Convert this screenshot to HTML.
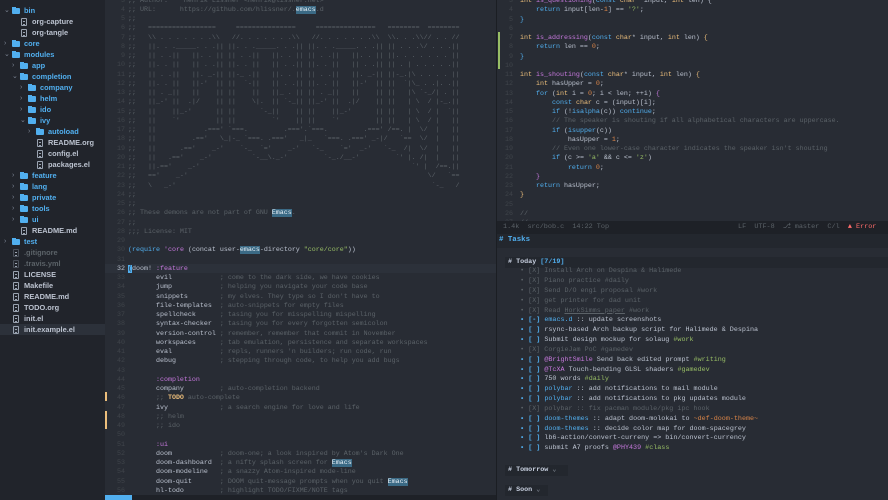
<!DOCTYPE html>
<html><head><meta charset="utf-8"><style>
*{margin:0;padding:0;box-sizing:border-box}
body{width:888px;height:500px;overflow:hidden;background:#282c34;position:relative;font-family:"Liberation Mono",monospace}
.abs{position:absolute}
#side{left:0;top:0;width:105px;height:500px;background:#21242b;font-family:"Liberation Sans",sans-serif;font-weight:bold;font-size:7.4px;color:#bbc2cf}
.r{position:absolute;height:11px;line-height:11px;white-space:nowrap}
.d{color:#51afef}
.dim{color:#5B6268}
.chev{position:absolute;color:#7c8594;font-size:7px;font-weight:normal}
.fold{position:absolute;width:8px;height:6px;background:#51afef;top:3px;border-radius:1px}
.fold:before{content:"";position:absolute;left:0;top:-1px;width:4px;height:2px;background:#51afef}
.file{position:absolute;width:6px;height:8px;border:1px solid #9aa3b1;top:1.5px;border-radius:1px}
.file:after{content:"";position:absolute;left:1px;top:2px;width:2px;height:2px;border-top:1px solid #9aa3b1;border-bottom:1px solid #9aa3b1}
.pre{white-space:pre;font-size:6.67px;line-height:9.25px;color:#bbc2cf}
.ln{color:#3f444a;text-align:right;width:22px}
.c{color:#5B6268}.k{color:#51afef}.t{color:#ECBE7B}.f{color:#c678dd}.n{color:#da8548}.s{color:#98be65}.p{color:#c678dd}
.hl{background:#3b6a85;color:#e6eef5}
.todo{color:#ECBE7B;font-weight:bold}
.org{white-space:pre;font-size:6.72px;line-height:9.83px;color:#bbc2cf}
.b{color:#51afef;font-weight:bold}
.x{color:#5B6268}
.g{color:#98be65}
.m{color:#c678dd}
.o{color:#da8548}
</style></head><body>

<div id="side" class="abs">
<div class="r" style="top:5px;left:4px"><span class="chev">⌄</span><span class="fold" style="left:8px"></span><span class="d" style="position:absolute;left:20px">bin</span></div>
<div class="r" style="top:16px;left:21px"><span class="file"></span><span style="position:absolute;left:11px">org-capture</span></div>
<div class="r" style="top:27px;left:21px"><span class="file"></span><span style="position:absolute;left:11px">org-tangle</span></div>
<div class="r" style="top:38px;left:4px"><span class="chev">›</span><span class="fold" style="left:8px"></span><span class="d" style="position:absolute;left:20px">core</span></div>
<div class="r" style="top:49px;left:4px"><span class="chev">⌄</span><span class="fold" style="left:8px"></span><span class="d" style="position:absolute;left:20px">modules</span></div>
<div class="r" style="top:60px;left:12px"><span class="chev">›</span><span class="fold" style="left:8px"></span><span class="d" style="position:absolute;left:20px">app</span></div>
<div class="r" style="top:71px;left:12px"><span class="chev">⌄</span><span class="fold" style="left:8px"></span><span class="d" style="position:absolute;left:20px">completion</span></div>
<div class="r" style="top:82px;left:20px"><span class="chev">›</span><span class="fold" style="left:8px"></span><span class="d" style="position:absolute;left:20px">company</span></div>
<div class="r" style="top:93px;left:20px"><span class="chev">›</span><span class="fold" style="left:8px"></span><span class="d" style="position:absolute;left:20px">helm</span></div>
<div class="r" style="top:104px;left:20px"><span class="chev">›</span><span class="fold" style="left:8px"></span><span class="d" style="position:absolute;left:20px">ido</span></div>
<div class="r" style="top:115px;left:20px"><span class="chev">⌄</span><span class="fold" style="left:8px"></span><span class="d" style="position:absolute;left:20px">ivy</span></div>
<div class="r" style="top:126px;left:28px"><span class="chev">›</span><span class="fold" style="left:8px"></span><span class="d" style="position:absolute;left:20px">autoload</span></div>
<div class="r" style="top:137px;left:37px"><span class="file"></span><span style="position:absolute;left:11px">README.org</span></div>
<div class="r" style="top:148px;left:37px"><span class="file"></span><span style="position:absolute;left:11px">config.el</span></div>
<div class="r" style="top:159px;left:37px"><span class="file"></span><span style="position:absolute;left:11px">packages.el</span></div>
<div class="r" style="top:170px;left:12px"><span class="chev">›</span><span class="fold" style="left:8px"></span><span class="d" style="position:absolute;left:20px">feature</span></div>
<div class="r" style="top:181px;left:12px"><span class="chev">›</span><span class="fold" style="left:8px"></span><span class="d" style="position:absolute;left:20px">lang</span></div>
<div class="r" style="top:192px;left:12px"><span class="chev">›</span><span class="fold" style="left:8px"></span><span class="d" style="position:absolute;left:20px">private</span></div>
<div class="r" style="top:203px;left:12px"><span class="chev">›</span><span class="fold" style="left:8px"></span><span class="d" style="position:absolute;left:20px">tools</span></div>
<div class="r" style="top:214px;left:12px"><span class="chev">›</span><span class="fold" style="left:8px"></span><span class="d" style="position:absolute;left:20px">ui</span></div>
<div class="r" style="top:225px;left:21px"><span class="file"></span><span style="position:absolute;left:11px">README.md</span></div>
<div class="r" style="top:236px;left:4px"><span class="chev">›</span><span class="fold" style="left:8px"></span><span class="d" style="position:absolute;left:20px">test</span></div>
<div class="r dim" style="top:247px;left:13px"><span class="file" style="border-color:#4a505a"></span><span style="position:absolute;left:11px">.gitignore</span></div>
<div class="r dim" style="top:258px;left:13px"><span class="file" style="border-color:#4a505a"></span><span style="position:absolute;left:11px">.travis.yml</span></div>
<div class="r" style="top:269px;left:13px"><span class="file"></span><span style="position:absolute;left:11px">LICENSE</span></div>
<div class="r" style="top:280px;left:13px"><span class="file"></span><span style="position:absolute;left:11px">Makefile</span></div>
<div class="r" style="top:291px;left:13px"><span class="file"></span><span style="position:absolute;left:11px">README.md</span></div>
<div class="r" style="top:302px;left:13px"><span class="file"></span><span style="position:absolute;left:11px">TODO.org</span></div>
<div class="r" style="top:313px;left:13px"><span class="file"></span><span style="position:absolute;left:11px">init.el</span></div>
<div class="abs" style="top:324px;left:0;width:105px;height:11px;background:#2c313a"></div>
<div class="r" style="top:324px;left:13px"><span class="file"></span><span style="position:absolute;left:11px">init.example.el</span></div>
</div>

<!-- middle pane -->
<div class="abs" style="left:105px;top:264px;width:392px;height:9.25px;background:#2c313a"></div>
<div class="abs" style="left:105px;top:392px;width:2px;height:9px;background:#ECBE7B"></div>
<div class="abs" style="left:105px;top:411px;width:2px;height:18px;background:#ECBE7B"></div>
<div class="abs pre ln" style="left:103px;top:-3.4px">3
4
5
6
7
8
9
10
11
12
13
14
15
16
17
18
19
20
21
22
23
24
25
26
27
28
29
30
31
<span style="color:#bbc2cf">32</span>
33
34
35
36
37
38
39
40
41
42
43
44
45
46
47
48
49
50
51
52
53
54
55
56</div>
<div class="abs pre" style="left:128px;top:-3.4px;width:368px;overflow:hidden"><span class="c">;; Author:    Henrik Lissner &lt;henrik@lissner.net&gt;
;; URL:      https://github.com/hlissner/.<span class="hl">emacs</span>.d
;;
;;   =================     ===============     ===============   ========  ========
;;   \\ . . . . . . .\\   //. . . . . . .\\   //. . . . . . .\\  \\. . .\\// . . //
;;   ||. . ._____. . .|| ||. . ._____. . .|| ||. . ._____. . .|| || . . .\/ . . .||
;;   || . .||   ||. . || || . .||   ||. . || || . .||   ||. . || ||. . . . . . . ||
;;   ||. . ||   || . .|| ||. . ||   || . .|| ||. . ||   || . .|| || . | . . . . .||
;;   || . .||   ||. _-|| ||-_ .||   ||. . || || . .||   ||. _-|| ||-_.|\ . . . . ||
;;   ||. . ||   ||-'  || ||  `-||   || . .|| ||. . ||   ||-'  || ||  `|\_ . .|. .||
;;   || . _||   ||    || ||    ||   ||_ . || || . _||   ||    || ||   |\ `-_/| . ||
;;   ||_-' ||  .|/    || ||    \|.  || `-_|| ||_-' ||  .|/    || ||   | \  / |-_.||
;;   ||    ||_-'      || ||      `-_||    || ||    ||_-'      || ||   | \  / |  `||
;;   ||    `'         || ||         `'    || ||    `'         || ||   | \  / |   ||
;;   ||            .===' `===.         .==='.`===.         .===' /==. |  \/  |   ||
;;   ||         .=='   \_|-_ `===. .==='   _|_   `===. .===' _-|/   `==  \/  |   ||
;;   ||      .=='    _-'    `-_  `='    _-'   `-_    `='  _-'   `-_  /|  \/  |   ||
;;   ||   .=='    _-'          `-__\._-'         `-_./__-'         `' |. /|  |   ||
;;   ||.=='    _-'                                                     `' |  /==.||
;;   =='    _-'                                                            \/   `==
;;   \   _-'                                                                `-_   /
;;
;;
;; These demons are not part of GNU <span class="hl">Emacs</span>.
;;
;;; License: MIT</span>

<span class="k">(require</span> <span class="p">'core</span> (concat user-<span class="hl">emacs</span>-directory <span class="s">"core/core"</span>))

<span style="background:#51afef;color:#282c34">(</span>doom! <span class="p">:feature</span>
       evil            <span class="c">; come to the dark side, we have cookies</span>
       jump            <span class="c">; helping you navigate your code base</span>
       snippets        <span class="c">; my elves. They type so I don't have to</span>
       file-templates  <span class="c">; auto-snippets for empty files</span>
       spellcheck      <span class="c">; tasing you for misspelling mispelling</span>
       syntax-checker  <span class="c">; tasing you for every forgotten semicolon</span>
       version-control <span class="c">; remember, remember that commit in November</span>
       workspaces      <span class="c">; tab emulation, persistence and separate workspaces</span>
       eval            <span class="c">; repls, runners 'n builders; run code, run</span>
       debug           <span class="c">; stepping through code, to help you add bugs</span>

       <span class="p">:completion</span>
       company         <span class="c">; auto-completion backend</span>
       <span class="c">;; <span class="todo">TODO</span> auto-complete</span>
       ivy             <span class="c">; a search engine for love and life</span>
       <span class="c">;; helm</span>
       <span class="c">;; ido</span>

       <span class="p">:ui</span>
       doom            <span class="c">; doom-one; a look inspired by Atom's Dark One</span>
       doom-dashboard  <span class="c">; a nifty splash screen for <span class="hl">Emacs</span></span>
       doom-modeline   <span class="c">; a snazzy Atom-inspired mode-line</span>
       doom-quit       <span class="c">; DOOM quit-message prompts when you quit <span class="hl">Emacs</span></span>
       hl-todo         <span class="c">; highlight TODO/FIXME/NOTE tags</span></div>
<div class="abs" style="left:105px;top:495px;width:392px;height:5px;background:#1e2127"></div>
<div class="abs" style="left:105px;top:495px;width:27px;height:5px;background:#51afef"></div>

<!-- divider -->
<div class="abs" style="left:496px;top:0;width:1px;height:500px;background:#1b1e23"></div>

<!-- right code pane -->
<div class="abs" style="left:498px;top:32px;width:2px;height:37px;background:#98be65"></div>
<div class="abs pre ln" style="left:491px;top:-2.9px">3
4
5
6
7
8
9
10
11
12
13
14
15
16
17
18
19
20
21
22
23
24
25
26
27</div>
<div class="abs pre" style="left:520px;top:-2.9px;width:368px;overflow:hidden"><span class="t">int</span> <span class="f">is_questioning</span>(<span class="k">const</span> <span class="t">char</span>* input, <span class="t">int</span> len) {
    <span class="k">return</span> input[len-<span class="n">1</span>] == <span class="s">'?'</span>;
<span class="k">}</span>

<span class="t">int</span> <span class="f">is_addressing</span>(<span class="k">const</span> <span class="t">char</span>* input, <span class="t">int</span> len) <span class="t">{</span>
    <span class="k">return</span> len == <span class="n">0</span>;
<span class="k">}</span>

<span class="t">int</span> <span class="f">is_shouting</span>(<span class="k">const</span> <span class="t">char</span>* input, <span class="t">int</span> len) <span class="t">{</span>
    <span class="t">int</span> hasUpper = <span class="n">0</span>;
    <span class="k">for</span> (<span class="t">int</span> i = <span class="n">0</span>; i &lt; len; ++i) <span class="f">{</span>
        <span class="k">const</span> <span class="t">char</span> c = (input)[i];
        <span class="k">if</span> (!<span class="k">isalpha</span>(c)) <span class="k">continue</span>;
        <span class="c">// The speaker is shouting if all alphabetical characters are uppercase.</span>
        <span class="k">if</span> (<span class="k">isupper</span>(c))
            hasUpper = <span class="n">1</span>;
        <span class="c">// Even one lower-case character indicates the speaker isn't shouting</span>
        <span class="k">if</span> (c &gt;= <span class="s">'a'</span> &amp;&amp; c &lt;= <span class="s">'z'</span>)
            <span class="k">return</span> <span class="n">0</span>;
    <span class="f">}</span>
    <span class="k">return</span> hasUpper;
<span class="t">}</span>

<span class="c">//</span>
<span class="c">//   ...</span></div>

<!-- right modeline -->
<div class="abs" style="left:497px;top:221px;width:391px;height:13px;background:#1e2127"></div>
<div class="abs pre" style="left:503px;top:223px;color:#5B6268;font-size:6.8px">1.4k  src/bob.c  14:22 Top</div>
<div class="abs pre" style="left:738px;top:223px;color:#5B6268;font-size:6.8px">LF  UTF-8  ⎇ master  C/l  <span style="color:#ff6c6b">▲ Error</span></div>

<!-- tasks -->
<div class="abs" style="left:497px;top:234px;width:391px;height:14px;background:#23272e"></div>
<div class="abs pre" style="left:499px;top:236px;color:#51afef;font-weight:bold;font-size:7.4px"># Tasks</div>
<div class="abs" style="left:505px;top:257px;width:383px;height:11px;background:#23272e"></div>
<div class="abs org" style="left:508px;top:257.5px"><span style="color:#c8d0e0;font-weight:bold"># Today <span class="b">[7/19]</span></span>
<span class="x">   • [X] Install Arch on Despina &amp; Halimede</span>
<span class="x">   • [X] Piano practice #daily</span>
<span class="x">   • [X] Send D/O engi proposal #work</span>
<span class="x">   • [X] get printer for dad unit</span>
<span class="x">   • [X] Read <u>HorkSimms paper</u> #work</span>
   <span class="b">•</span> <span class="b">[-]</span> <span class="d">emacs.d</span> :: update screenshots
   <span class="b">•</span> <span class="b">[ ]</span> rsync-based Arch backup script for Halimede &amp; Despina
   <span class="b">•</span> <span class="b">[ ]</span> Submit design mockup for solaug <span class="g">#work</span>
<span class="x">   • [X] CorgieJam PoC #gamedev</span>
   <span class="b">•</span> <span class="b">[ ]</span> <span class="m">@BrightSmile</span> Send back edited prompt <span class="g">#writing</span>
   <span class="b">•</span> <span class="b">[ ]</span> <span class="m">@TcXA</span> Touch-bending GLSL shaders <span class="g">#gamedev</span>
   <span class="b">•</span> <span class="b">[ ]</span> 750 words <span class="g">#daily</span>
   <span class="b">•</span> <span class="b">[ ]</span> <span class="d">polybar</span> :: add notifications to mail module
   <span class="b">•</span> <span class="b">[ ]</span> <span class="d">polybar</span> :: add notifications to pkg updates module
<span class="x">   • [X] polybar :: fix pacman module/pkg ipc hook</span>
   <span class="b">•</span> <span class="b">[ ]</span> <span class="d">doom-themes</span> :: adapt doom-molokai to <span class="o">~def-doom-theme~</span>
   <span class="b">•</span> <span class="b">[ ]</span> <span class="d">doom-themes</span> :: decide color map for doom-spacegrey
   <span class="b">•</span> <span class="b">[ ]</span> lb6-action/convert-curreny =&gt; bin/convert-currency
   <span class="b">•</span> <span class="b">[ ]</span> submit A7 proofs <span class="m">@PHY439</span> <span class="g">#class</span></div>
<div class="abs" style="left:505px;top:465px;width:63px;height:11px;background:#23272e"></div>
<div class="abs org" style="left:508px;top:465.5px;color:#c8d0e0;font-weight:bold"># Tomorrow <span style="font-weight:normal;color:#8b929e">⌄</span></div>
<div class="abs" style="left:505px;top:485px;width:43px;height:11px;background:#23272e"></div>
<div class="abs org" style="left:508px;top:485.5px;color:#c8d0e0;font-weight:bold"># Soon <span style="font-weight:normal;color:#8b929e">⌄</span></div>
</body></html>
